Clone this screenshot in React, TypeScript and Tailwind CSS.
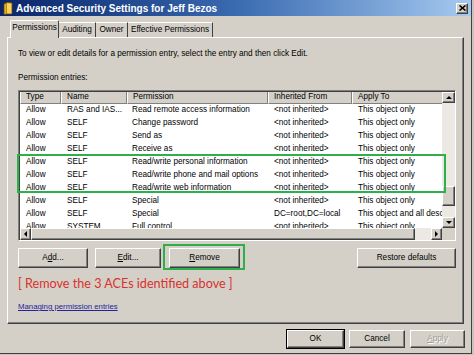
import type { ReactNode } from "react";

interface Entry {
  type: string;
  name: string;
  permission: string;
  inherited: string;
  applyTo: string;
}

const ENTRIES: Entry[] = [
  { type: "Allow", name: "RAS and IAS...", permission: "Read remote access information", inherited: "<not inherited>", applyTo: "This object only" },
  { type: "Allow", name: "SELF", permission: "Change password", inherited: "<not inherited>", applyTo: "This object only" },
  { type: "Allow", name: "SELF", permission: "Send as", inherited: "<not inherited>", applyTo: "This object only" },
  { type: "Allow", name: "SELF", permission: "Receive as", inherited: "<not inherited>", applyTo: "This object only" },
  { type: "Allow", name: "SELF", permission: "Read/write personal information", inherited: "<not inherited>", applyTo: "This object only" },
  { type: "Allow", name: "SELF", permission: "Read/write phone and mail options", inherited: "<not inherited>", applyTo: "This object only" },
  { type: "Allow", name: "SELF", permission: "Read/write web information", inherited: "<not inherited>", applyTo: "This object only" },
  { type: "Allow", name: "SELF", permission: "Special", inherited: "<not inherited>", applyTo: "This object only" },
  { type: "Allow", name: "SELF", permission: "Special", inherited: "DC=root,DC=local", applyTo: "This object and all descendant objects" },
  { type: "Allow", name: "SYSTEM", permission: "Full control", inherited: "<not inherited>", applyTo: "This object only" },
];

const COLUMNS = [
  { label: "Type", width: "w-[41px]" },
  { label: "Name", width: "w-[66px]" },
  { label: "Permission", width: "w-[141px]" },
  { label: "Inherited From", width: "w-[84px]" },
  { label: "Apply To", width: "w-[91px]" },
];

const BEVEL =
  "border border-t-white border-l-white border-r-[#404040] border-b-[#404040] shadow-[inset_-1px_-1px_0_#808080]";

function Button({ children, className = "", disabled = false }: { children: ReactNode; className?: string; disabled?: boolean }) {
  return (
    <div
      className={`flex items-center justify-center bg-[#d4d0c8] text-[8.2px] ${BEVEL} ${
        disabled ? "text-[#a09c94] [text-shadow:1px_1px_0_#fff]" : "text-black"
      } ${className}`}
    >
      {children}
    </div>
  );
}

function Arrow({ dir }: { dir: "up" | "down" | "left" | "right" }) {
  const pts = {
    up: "1,5 4,2 7,5",
    down: "1,2 4,5 7,2",
    left: "5,1 2,4 5,7",
    right: "2,1 5,4 2,7",
  }[dir];
  return (
    <svg width="8" height="8" viewBox="0 0 8 8">
      <polygon points={pts} fill="#000" />
    </svg>
  );
}

function ScrollButton({ dir, className = "" }: { dir: "up" | "down" | "left" | "right"; className?: string }) {
  return (
    <div className={`flex shrink-0 items-center justify-center bg-[#d4d0c8] ${BEVEL} ${className}`}>
      <Arrow dir={dir} />
    </div>
  );
}

function Track({ className = "" }: { className?: string }) {
  return <div className={`bg-[#ece9e4] ${className}`} />;
}

function PermissionList() {
  return (
    <div className="relative h-[151px] w-[438px] border border-[#808080] border-r-white border-b-white">
      <div className="flex h-full w-full flex-col bg-white shadow-[inset_1px_1px_0_#404040]">
        <div className="flex min-h-0 flex-1 pl-px pt-px">
          <div className="flex w-[423px] flex-col overflow-hidden">
            <div className="flex h-[12px] shrink-0">
              {COLUMNS.map((col) => (
                <div
                  key={col.label}
                  className={`${col.width} flex shrink-0 items-center overflow-hidden whitespace-nowrap border-l border-l-white border-r border-r-[#808080] border-b border-b-[#808080] bg-[#d4d0c8] pl-[5px] text-[8.2px]`}
                >
                  {col.label}
                </div>
              ))}
            </div>
            {ENTRIES.map((row, i) => (
              <div key={i} className="flex h-[13px] shrink-0 items-center text-[8.2px] text-black">
                <div className="w-[41px] shrink-0 pl-[6px]">{row.type}</div>
                <div className="w-[66px] shrink-0 pl-[6px]">{row.name}</div>
                <div className="w-[141px] shrink-0 overflow-hidden whitespace-nowrap pl-[5px]">{row.permission}</div>
                <div className="w-[84px] shrink-0 pl-[6px]">{row.inherited}</div>
                <div className="w-[91px] shrink-0 overflow-hidden whitespace-nowrap pl-[6px]">{row.applyTo}</div>
              </div>
            ))}
          </div>
          <div className="flex w-[13px] shrink-0 flex-col">
            <ScrollButton dir="up" className="h-[11px]" />
            <Track className="h-[83px]" />
            <div className={`h-[20px] bg-[#d4d0c8] ${BEVEL}`} />
            <Track className="flex-1" />
            <ScrollButton dir="down" className="h-[11px]" />
          </div>
        </div>
        <div className="flex h-[12px] shrink-0 pl-px">
          <ScrollButton dir="left" className="w-[11px]" />
          <div className={`w-[384px] bg-[#d4d0c8] ${BEVEL}`} />
          <Track className="flex-1" />
          <ScrollButton dir="right" className="w-[11px]" />
          <div className="w-[13px] bg-[#d4d0c8]" />
        </div>
      </div>
      <div className="absolute left-[-2px] top-[63px] h-[39px] w-[429px] border-2 border-[#2db04b]" />
    </div>
  );
}

export default function App() {
  return (
    <div className="h-[355px] w-[474px] overflow-hidden bg-[#c8c4bc] font-['Liberation_Sans',Arial,sans-serif]">
      <div className="flex h-[354px] w-[472px] flex-col border-r border-b border-[#404040] bg-[#d4d0c8]">
        <div className="flex h-[16px] shrink-0 items-center bg-linear-to-r from-[#0a246a] via-[#3a6ab0] to-[#a6caf0] pl-[3px] pr-[3px]">
          <svg width="10" height="13" viewBox="0 0 10 13">
            <path d="M1 2 L4 0.5 L4 12 L1 12.5 Z" fill="#e6b422" stroke="#6b4a00" strokeWidth="0.8" />
            <path d="M4 0.5 L9 1 L9 12 L4 12" fill="#f4d35e" stroke="#6b4a00" strokeWidth="0.8" />
          </svg>
          <span className="ml-[3px] text-[10px] font-bold text-white">Advanced Security Settings for Jeff Bezos</span>
          <div className={`ml-auto flex h-[11px] w-[12px] items-center justify-center bg-[#d4d0c8] ${BEVEL}`}>
            <svg width="7" height="6" viewBox="0 0 7 6">
              <path d="M0.5 0.5 L6.5 5.5 M6.5 0.5 L0.5 5.5" stroke="#000" strokeWidth="1.6" />
            </svg>
          </div>
        </div>

        <div className="mt-[4px] flex h-[17px] shrink-0 items-end pl-[10px] text-[8.2px]">
          <div className="relative z-10 -mb-px flex h-[18px] w-[49px] items-center justify-center rounded-t-[2px] border-t border-l border-white border-r border-r-[#404040] bg-[#d4d0c8] pb-[2px]">
            Permissions
          </div>
          <div className="flex h-[15px] w-[37px] items-center justify-center border-t border-white border-r border-r-[#404040]">Auditing</div>
          <div className="flex h-[15px] w-[32px] items-center justify-center border-t border-white border-r border-r-[#404040]">Owner</div>
          <div className="flex h-[15px] w-[85px] items-center justify-center border-t border-white border-r border-r-[#404040]">
            Effective Permissions
          </div>
        </div>

        <div className="mx-[7px] flex h-[287px] shrink-0 flex-col border border-t-white border-l-white border-r-[#404040] border-b-[#404040] px-[10px] pt-[9px] shadow-[inset_-1px_-1px_0_#808080]">
          <div className="h-[13px] text-[8.2px] leading-[13px]">
            To view or edit details for a permission entry, select the entry and then click Edit.
          </div>
          <div className="mt-[11px] h-[13px] text-[8.2px] leading-[13px]">Permission entries:</div>
          <div className="mt-[6px]">
            <PermissionList />
          </div>
          <div className="mt-[7px] flex h-[20px] w-[438px] items-center">
            <Button className="h-[20px] w-[70px]">
              A<span className="underline">d</span>d...
            </Button>
            <Button className="ml-[7px] h-[20px] w-[66px]">
              <span className="underline">E</span>dit...
            </Button>
            <div className="relative ml-[8px]">
              <Button className="h-[20px] w-[71px]">
                <span className="underline">R</span>emove
              </Button>
              <div className="absolute left-[-6px] top-[-4px] h-[26px] w-[82px] border-2 border-[#2db04b]" />
            </div>
            <Button className="ml-auto h-[20px] w-[99px]">Restore defaults</Button>
          </div>
          <div className="mt-[7px] font-['Lato',sans-serif] text-[12.6px] leading-[17px] text-[#d7322e]">
            [ Remove the 3 ACEs identified above ]
          </div>
          <div className="mt-[9px] text-[7.8px] leading-[12px] text-[#24249a] underline">Managing permission entries</div>
        </div>

        <div className="mt-[6px] flex justify-end gap-[5px] pr-[6px]">
          <Button className="h-[18px] w-[57px] outline outline-1 outline-black">OK</Button>
          <Button className="h-[18px] w-[56px]">Cancel</Button>
          <Button className="h-[18px] w-[55px]" disabled>
            <span className="underline">A</span>pply
          </Button>
        </div>
      </div>
    </div>
  );
}
